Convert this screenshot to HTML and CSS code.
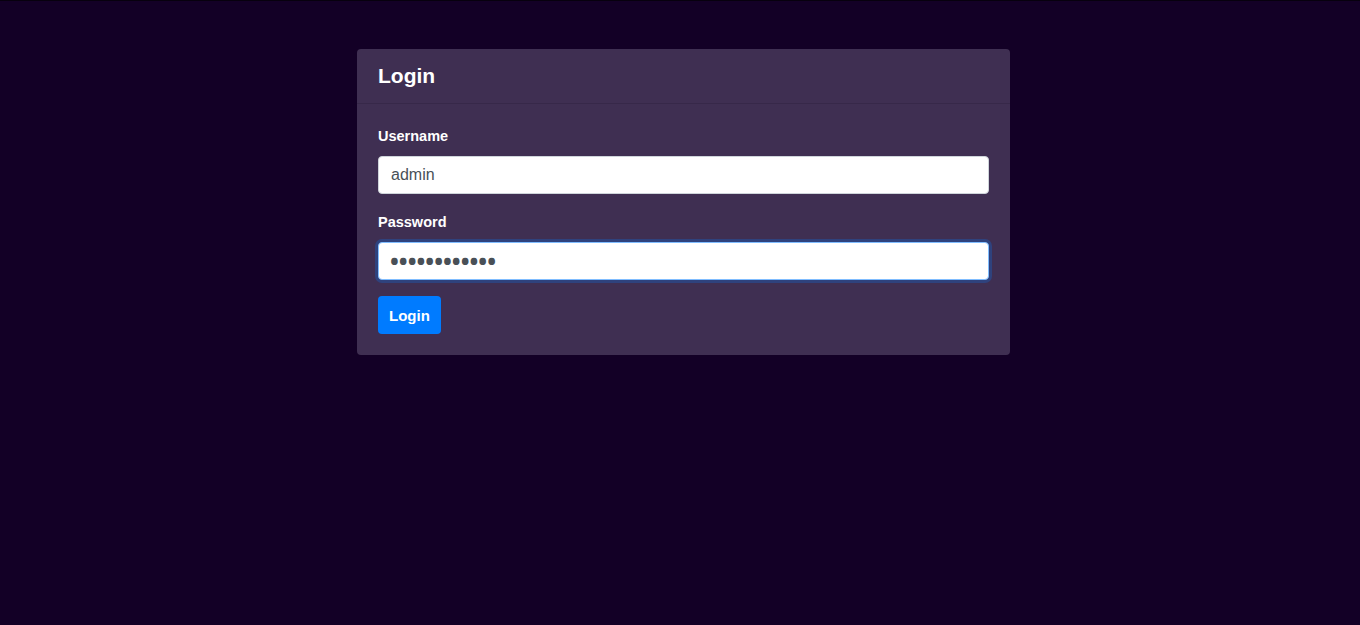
FILE: index.html
```html
<!DOCTYPE html>
<html lang="en">
<head>
  <meta charset="UTF-8">
  <meta name="viewport" content="width=device-width, initial-scale=1.0">
  <title>Login</title>
  <link rel="stylesheet" href="styles.css">
</head>
<body>
  <div class="page">
    <div class="card">
      <div class="card-header">
        <h4 class="card-title">Login</h4>
      </div>
      <div class="card-body">
        <form id="loginForm">
          <div class="form-group">
            <label for="username">Username</label>
            <input type="text" id="username" class="form-control" value="admin">
          </div>
          <div class="form-group">
            <label for="password">Password</label>
            <input type="password" id="password" class="form-control focused" value="adminpass123">
          </div>
          <button type="submit" class="btn">Login</button>
        </form>
      </div>
    </div>
  </div>
</body>
</html>
```

FILE: styles.css
```css
body {
  font-family: 'Liberation Sans', Arial, sans-serif;
  background: #130026;
  color: #fff;
  margin: 0;
  border-top: 1px solid #07000e;
  min-height: 624px;
}
.page {
  display: flex;
  justify-content: center;
  padding: 48px 0 0 7px;
}
.card {
  width: 653px;
  background: #3f2f52;
  border-radius: 4px;
}
.card-header {
  padding: 12px 21px;
  border-bottom: 1px solid #372849;
}
.card-title {
  margin: 0;
  font-size: 21px;
  font-weight: 700;
  line-height: 30px;
}
.card-body {
  padding: 20px 21px 21px;
}
.form-group {
  margin-bottom: 16px;
}
label {
  display: block;
  font-size: 14.5px;
  font-weight: 700;
  line-height: 24px;
  margin-bottom: 8px;
}
.form-control {
  display: block;
  width: 100%;
  height: 38px;
  padding: 6px 12px;
  font-family: inherit;
  font-size: 16px;
  color: #495057;
  background: #fff;
  border: 1px solid #ced4da;
  border-radius: 4px;
  box-sizing: border-box;
  outline: none;
}
input[type="password"] {
  font-family: 'Noto Sans', sans-serif;
  font-size: 23.5px;
  font-weight: 700;
  padding: 0 11px;
}
.form-control.focused,
.form-control:focus {
  border-color: #80bdff;
  box-shadow: 0 0 0 3px rgba(0, 123, 255, 0.25);
}
.btn {
  background-color: #007bff;
  color: #fff;
  border: none;
  padding: 0 11px;
  height: 38px;
  font-family: inherit;
  font-size: 15px;
  font-weight: 700;
  border-radius: 4px;
  cursor: pointer;
}
.btn:hover {
  background-color: #0069d9;
}
```
